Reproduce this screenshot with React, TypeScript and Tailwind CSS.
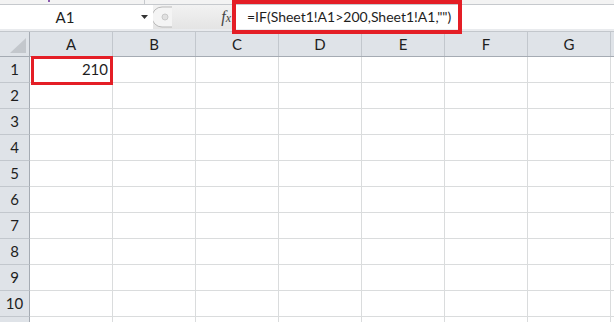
import React from "react";

const cols = ["A", "B", "C", "D", "E", "F", "G"];
const rows = [1, 2, 3, 4, 5, 6, 7, 8, 9, 10, 11];

export default function App() {
  return (
    <div
      className="relative w-[614px] h-[322px] overflow-hidden bg-white text-[#1e1e1e]"
      style={{ fontFamily: "Lato, 'Noto Sans', sans-serif" }}
    >
      {/* top strip (ribbon edge) */}
      <div className="relative h-[5px] bg-[#f3f3f3] border-b border-[#c6c9cd] flex">
        <div className="w-[48px] shrink-0" />
        <div className="w-[2px] h-[2px] shrink-0 bg-[#8a5ab0]" />
        <div className="w-[94px] shrink-0" />
        <div className="w-px h-full shrink-0 bg-[#c6c9cd]" />
        <div className="w-[288px] shrink-0" />
        <div className="w-px h-full shrink-0 bg-[#c6c9cd]" />
      </div>

      {/* formula bar row */}
      <div className="flex h-[24px]">
        <div className="relative w-[153px] shrink-0 bg-white flex items-center">
          <span className="w-[130px] text-center text-[15px] leading-none">A1</span>
          <svg className="absolute left-[141px] top-[10px]" width="8" height="5" viewBox="0 0 8 5">
            <path d="M0 0 H7 L3.5 4 Z" fill="#333" />
          </svg>
        </div>
        <div className="relative w-[83px] shrink-0 bg-gradient-to-b from-[#f2f2f2] to-[#e4e4e4] flex items-center justify-end pr-[5px]">
          <svg className="absolute left-0 top-[1px]" width="20" height="22" viewBox="0 0 20 22">
            <path d="M19 1 H9 A10 10 0 0 0 9 21 H19" fill="#f4f4f4" stroke="#b9b9b9" />
            <circle cx="12" cy="11" r="3" fill="#e0e0e0" stroke="#c8c8c8" />
          </svg>
          <span
            className="italic text-[16px] leading-none text-[#444]"
            style={{ fontFamily: "'Liberation Serif', serif" }}
          >
            f<span className="text-[12px]">x</span>
          </span>
        </div>
        <div className="flex-1 min-w-0 bg-white flex items-center pl-[11px]">
          <span className="text-[14px] leading-none whitespace-nowrap">=IF(Sheet1!A1&gt;200,Sheet1!A1,"")</span>
        </div>
      </div>

      {/* band */}
      <div className="h-[3px] bg-[#e9ebee] border-b border-[#c3c7cc]" />

      {/* sheet grid */}
      <div className="flex flex-col">
        {/* column headers */}
        <div className="flex h-[25px] bg-[#dfe3e8] border-b border-[#a5abb3]">
          <div className="relative w-[30px] shrink-0 border-r border-[#a5abb3]">
            <svg className="absolute left-[10px] top-[6px]" width="16" height="15" viewBox="0 0 16 15">
              <path d="M16 0 V15 H0 Z" fill="#c3c7cc" />
            </svg>
          </div>
          {cols.map((c) => (
            <div
              key={c}
              className="w-[83px] shrink-0 border-r border-[#c2c7cd] flex items-center justify-center text-[15px]"
            >
              {c}
            </div>
          ))}
          <div className="flex-1" />
        </div>

        {rows.map((r) => (
          <div key={r} className="flex h-[26px] shrink-0">
            <div className="w-[30px] shrink-0 bg-[#dfe3e8] border-r border-[#a5abb3] border-b border-b-[#c2c7cd] flex items-center justify-center text-[15px]">
              {r <= 10 ? r : ""}
            </div>
            {cols.map((c) => (
              <div
                key={c}
                className="w-[83px] shrink-0 border-r border-b border-[#dadcdd] flex items-center justify-end pr-[4px] text-[15px]"
              >
                {r === 1 && c === "A" ? "210" : ""}
              </div>
            ))}
            <div className="flex-1 border-b border-[#dadcdd]" />
          </div>
        ))}
      </div>

      {/* highlight boxes */}
      <div className="absolute left-[232px] top-0 w-[230px] h-[34px] border-[4px] border-[#e41e26]" />
      <div className="absolute left-[31px] top-[56px] w-[82px] h-[29px] border-[3px] border-[#e41e26]" />
    </div>
  );
}
